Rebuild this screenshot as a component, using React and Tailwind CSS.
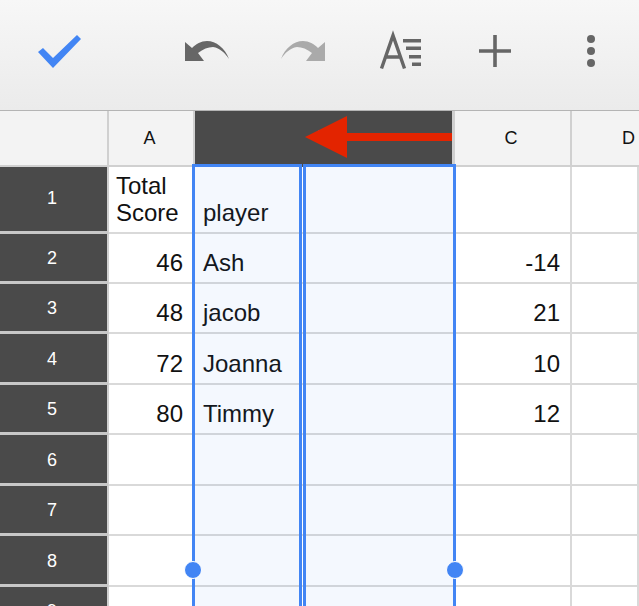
const rows = [
  { n: "1", h: "h-[67px]", a: "", b: "player", c: "" },
  { n: "2", h: "h-[50px]", a: "46", b: "Ash", c: "-14" },
  { n: "3", h: "h-[50px]", a: "48", b: "jacob", c: "21" },
  { n: "4", h: "h-[51px]", a: "72", b: "Joanna", c: "10" },
  { n: "5", h: "h-[50px]", a: "80", b: "Timmy", c: "12" },
  { n: "6", h: "h-[51px]", a: "", b: "", c: "" },
  { n: "7", h: "h-[50px]", a: "", b: "", c: "" },
  { n: "8", h: "h-[51px]", a: "", b: "", c: "" },
  { n: "9", h: "h-[50px]", a: "", b: "", c: "" },
];

function Row({ r }) {
  const cell = "h-full shrink-0 border-r-2 border-b-2 border-[#d9d9d9] flex items-end pb-[6px] text-[24px] leading-[27px] text-[#111]";
  const first = r.n === "1";
  return (
    <div className={`flex ${r.h}`}>
      <div className={`h-full w-[109px] shrink-0 border-r-2 border-b-[3px] border-r-[#d0d0d0] border-b-[#c8c8c8] bg-[#4a4a4a] text-white text-[18px] flex items-center justify-center pr-[3px] ${first ? "pb-[2px]" : "pt-[2px]"}`}>
        {r.n}
      </div>
      <div className={`${cell} w-[86px] justify-end pr-[10px]`}>
        {first ? (
          <span className="block w-full pl-[7px]">Total<br />Score</span>
        ) : (
          r.a
        )}
      </div>
      <div className={`${cell} w-[107px] pl-[8px]`}>{r.b}</div>
      <div className={`${cell} w-[153px]`}></div>
      <div className={`${cell} w-[117px] justify-end pr-[10px]`}>{r.c}</div>
      <div className={`${cell} flex-1 border-r-0`}></div>
    </div>
  );
}

export default function App() {
  return (
    <div className="relative w-[639px] h-[606px] overflow-hidden bg-white font-['Liberation_Sans',Arial,sans-serif]">
      {/* toolbar */}
      <div className="h-[111px] flex items-center pb-[10px] border-b border-[#b4b4b4] bg-gradient-to-b from-[#f7f7f7] to-[#ebebeb]">
        <svg className="ml-[36px] shrink-0" width="48" height="40" viewBox="36 30 48 40">
          <polygon fill="#4285f4" points="38,52 43,48 53,58 77,35 81,39 53,68" />
        </svg>
        <svg className="ml-[99px] shrink-0" width="48" height="40" viewBox="183 30 48 40">
          <path fill="#666" d="M185 42 V61 H204 L198 53 C203 49 208 47 213 47 C220 48 225 53 229 59 C225 48 216 41 207 41 C201 41 196 44 192 48 Z" />
        </svg>
        <svg className="ml-[48px] shrink-0" width="48" height="40" viewBox="279 30 48 40">
          <path fill="#aaa" d="M325 42 V61 H306 L312 53 C307 49 302 47 297 47 C290 48 285 53 281 59 C285 48 294 41 303 41 C309 41 314 44 318 48 Z" />
        </svg>
        <svg className="ml-[51px] shrink-0" width="46" height="40" viewBox="378 30 46 40">
          <path fill="none" stroke="#666" strokeWidth="3.4" d="M381.5 68.5 L393 35.5 L404.5 68.5 M385.5 57 L400.5 57" />
          <path fill="#666" d="M403 39h18v3.5h-18z M406 46.5h15v3.5h-15z M409 55h12v3.5h-12z M412 62.5h9v3.5h-9z" />
        </svg>
        <svg className="ml-[53px] shrink-0" width="36" height="40" viewBox="477 30 36 40">
          <path fill="none" stroke="#666" strokeWidth="3.6" d="M495 35V67M479 51H511" />
        </svg>
        <svg className="ml-[72px] shrink-0" width="12" height="40" viewBox="585 30 12 40">
          <circle cx="591" cy="39" r="4" fill="#666" />
          <circle cx="591" cy="51" r="4" fill="#666" />
          <circle cx="591" cy="63" r="4" fill="#666" />
        </svg>
      </div>

      {/* column headers */}
      <div className="flex h-[56px] text-[18px] text-[#111]">
        <div className="w-[109px] shrink-0 border-r-2 border-b-2 border-[#d0d0d0] bg-[#f3f3f3]"></div>
        <div className="w-[86px] shrink-0 border-r-2 border-b-2 border-[#d0d0d0] bg-[#f3f3f3] flex items-center justify-center pr-[3px]">A</div>
        <div className="w-[260px] shrink-0 border-r-[3px] border-r-[#d0d0d0] bg-[#4a4a4a] text-white flex items-center justify-center pb-[3px]">B</div>
        <div className="w-[117px] shrink-0 border-r-2 border-b-2 border-[#d0d0d0] bg-[#f3f3f3] flex items-center justify-center pr-[3px]">C</div>
        <div className="flex-1 border-b-2 border-[#d0d0d0] bg-[#f3f3f3] flex items-center pl-[50px]">D</div>
      </div>

      {/* rows */}
      <div>
        {rows.map((r) => (
          <Row key={r.n} r={r} />
        ))}
      </div>

      {/* selection overlays */}
      <div className="absolute left-[192px] top-[164px] w-[110px] h-[460px] border-[3px] border-[#4285f4] bg-[#4285f4]/6"></div>
      <div className="absolute left-[303px] top-[164px] w-[153px] h-[460px] border-[3px] border-[#4285f4] bg-[#4285f4]/6"></div>
      <div className="absolute left-[184px] top-[561px] w-[18px] h-[18px] rounded-full bg-[#4285f4] border-[1.5px] border-white"></div>
      <div className="absolute left-[446px] top-[561px] w-[18px] h-[18px] rounded-full bg-[#4285f4] border-[1.5px] border-white"></div>

      {/* red arrow annotation */}
      <svg className="absolute left-[304px] top-[114px]" width="150" height="46" viewBox="304 114 150 46">
        <polygon fill="#e32400" points="305,137 347,116 347,133 452,133 452,141 347,141 347,158" />
      </svg>
    </div>
  );
}
